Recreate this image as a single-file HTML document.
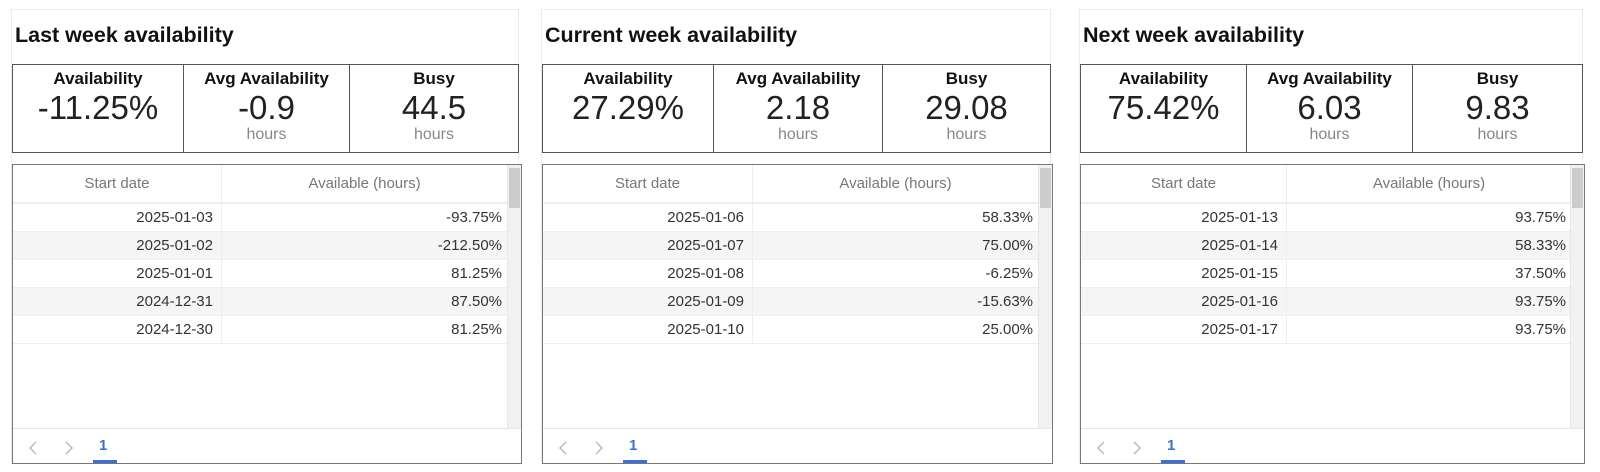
<!DOCTYPE html>
<html><head><meta charset="utf-8"><style>
*{box-sizing:border-box;margin:0;padding:0}
body{width:1600px;height:472px;background:#fff;font-family:"Liberation Sans",Arial,sans-serif;position:relative;overflow:hidden}
.p{position:absolute;top:9px;height:455px;border:1px solid #ebebeb}
.t{position:absolute;left:3px;top:13px;font-size:21.5px;font-weight:bold;color:#111}
.k{position:absolute;top:54px;left:0;height:89px;border:1px solid #555;display:flex;background:#fff}
.k>div{border-left:1px solid #555;text-align:center;height:100%}
.k>div:first-child{border-left:none}
.l{font-size:17px;font-weight:bold;color:#111;margin-top:4px;line-height:19px}
.v{font-size:33px;color:#222;line-height:34px;margin-top:3px}
.h{font-size:16px;color:#888;line-height:18px;margin-top:1px}
.tb{position:absolute;top:154px;height:300px;border:1px solid #777;background:#fff;overflow:hidden}
.hd,.r{position:absolute;left:0;display:flex;font-size:15px;color:#333}
.hd{top:0;height:39px;line-height:38px;color:#777;border-bottom:2px solid #eee}
.hd div{text-align:center;border-right:1px solid #eee}
.r{height:28px;line-height:28px;border-bottom:1px solid #eee}
.r div{text-align:right;padding-right:8px;border-right:1px solid #eee}
.r div+div{flex:1;border:none;padding-right:5px}
.r.g{background:#f5f5f5}
.sb{position:absolute;top:0;right:0;width:14px;height:263px;background:#f1f1f1;border-left:1px solid #e6e6e6}
.sb i{position:absolute;left:1px;top:3px;width:11px;height:40px;background:#ccc}
.pg{position:absolute;left:0;right:0;top:263px;bottom:0;border-top:1px solid #e6e6e6}
.pg svg{position:absolute;top:11px}
.pg b{position:absolute;left:86px;top:8px;font-size:15px;color:#3b6fd8;font-weight:bold}
.pg u{position:absolute;left:80px;width:24px;bottom:0;height:3px;background:#3b6fd8}
</style></head><body>

<div class="p" style="left:11px;width:508px">
<div class="t">Last week availability</div>
<div class="k" style="width:507px">
<div style="width:170px"><div class="l">Availability</div><div class="v">-11.25%</div></div>
<div style="width:166px"><div class="l">Avg Availability</div><div class="v">-0.9</div><div class="h">hours</div></div>
<div style="flex:1"><div class="l">Busy</div><div class="v">44.5</div><div class="h">hours</div></div>
</div>
<div class="tb" style="left:0;width:510px">
<div class="hd" style="width:494px"><div style="width:209px">Start date</div><div style="flex:1;border:none">Available (hours)</div></div>
<div class="r" style="top:39px;width:494px"><div style="width:209px">2025-01-03</div><div>-93.75%</div></div>
<div class="r g" style="top:67px;width:494px"><div style="width:209px">2025-01-02</div><div>-212.50%</div></div>
<div class="r" style="top:95px;width:494px"><div style="width:209px">2025-01-01</div><div>81.25%</div></div>
<div class="r g" style="top:123px;width:494px"><div style="width:209px">2024-12-31</div><div>87.50%</div></div>
<div class="r" style="top:151px;width:494px"><div style="width:209px">2024-12-30</div><div>81.25%</div></div>
<div class="sb"><i></i></div>
<div class="pg"><svg style="left:14px" width="12" height="16"><path d="M9 2L3 8l6 6" fill="none" stroke="#bbb" stroke-width="1.5"/></svg><svg style="left:50px" width="12" height="16"><path d="M3 2l6 6-6 6" fill="none" stroke="#bbb" stroke-width="1.5"/></svg><b>1</b><u></u></div>
</div>
</div>

<div class="p" style="left:541px;width:510px">
<div class="t">Current week availability</div>
<div class="k" style="width:509px">
<div style="width:170px"><div class="l">Availability</div><div class="v">27.29%</div></div>
<div style="width:169px"><div class="l">Avg Availability</div><div class="v">2.18</div><div class="h">hours</div></div>
<div style="flex:1"><div class="l">Busy</div><div class="v">29.08</div><div class="h">hours</div></div>
</div>
<div class="tb" style="left:0;width:511px">
<div class="hd" style="width:495px"><div style="width:210px">Start date</div><div style="flex:1;border:none">Available (hours)</div></div>
<div class="r" style="top:39px;width:495px"><div style="width:210px">2025-01-06</div><div>58.33%</div></div>
<div class="r g" style="top:67px;width:495px"><div style="width:210px">2025-01-07</div><div>75.00%</div></div>
<div class="r" style="top:95px;width:495px"><div style="width:210px">2025-01-08</div><div>-6.25%</div></div>
<div class="r g" style="top:123px;width:495px"><div style="width:210px">2025-01-09</div><div>-15.63%</div></div>
<div class="r" style="top:151px;width:495px"><div style="width:210px">2025-01-10</div><div>25.00%</div></div>
<div class="sb"><i></i></div>
<div class="pg"><svg style="left:14px" width="12" height="16"><path d="M9 2L3 8l6 6" fill="none" stroke="#bbb" stroke-width="1.5"/></svg><svg style="left:50px" width="12" height="16"><path d="M3 2l6 6-6 6" fill="none" stroke="#bbb" stroke-width="1.5"/></svg><b>1</b><u></u></div>
</div>
</div>

<div class="p" style="left:1079px;width:504px">
<div class="t">Next week availability</div>
<div class="k" style="width:503px">
<div style="width:165px"><div class="l">Availability</div><div class="v">75.42%</div></div>
<div style="width:166px"><div class="l">Avg Availability</div><div class="v">6.03</div><div class="h">hours</div></div>
<div style="flex:1"><div class="l">Busy</div><div class="v">9.83</div><div class="h">hours</div></div>
</div>
<div class="tb" style="left:0;width:505px">
<div class="hd" style="width:490px"><div style="width:206px">Start date</div><div style="flex:1;border:none">Available (hours)</div></div>
<div class="r" style="top:39px;width:490px"><div style="width:206px">2025-01-13</div><div>93.75%</div></div>
<div class="r g" style="top:67px;width:490px"><div style="width:206px">2025-01-14</div><div>58.33%</div></div>
<div class="r" style="top:95px;width:490px"><div style="width:206px">2025-01-15</div><div>37.50%</div></div>
<div class="r g" style="top:123px;width:490px"><div style="width:206px">2025-01-16</div><div>93.75%</div></div>
<div class="r" style="top:151px;width:490px"><div style="width:206px">2025-01-17</div><div>93.75%</div></div>
<div class="sb"><i></i></div>
<div class="pg"><svg style="left:14px" width="12" height="16"><path d="M9 2L3 8l6 6" fill="none" stroke="#bbb" stroke-width="1.5"/></svg><svg style="left:50px" width="12" height="16"><path d="M3 2l6 6-6 6" fill="none" stroke="#bbb" stroke-width="1.5"/></svg><b>1</b><u></u></div>
</div>
</div>

</body></html>
